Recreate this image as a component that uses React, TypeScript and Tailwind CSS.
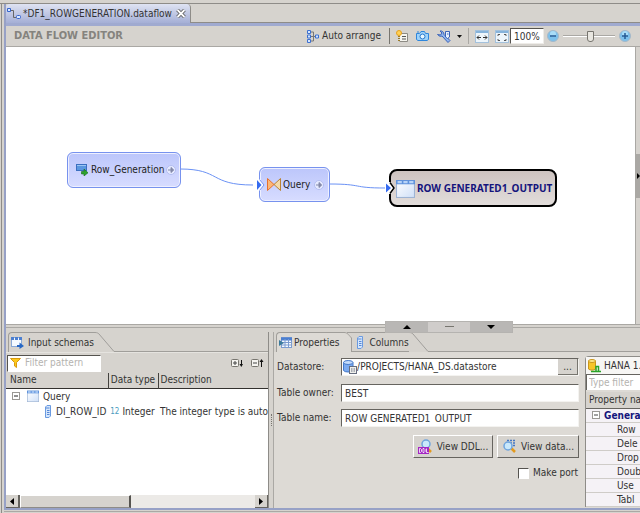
import type { ReactNode } from "react"

const properties = ["Row", "Dele", "Drop", "Doub", "Use", "Tabl"]

function Slant({ width, fill }: { width: number; fill: string }) {
  return (
    <svg width={width} height="20" viewBox={`0 0 ${width} 20`} className="shrink-0">
      <path d={`M0 0.5 C2 0.5 3 1 4 2 L${width} 19.5 L${width} 20 L0 20 Z`} fill={fill} />
      <path d={`M0 0.5 C2 0.5 3 1 4 2 L${width} 19.5`} fill="none" stroke="#a09e9a" />
    </svg>
  )
}

function NodeArrow() {
  return (
    <svg width="10" height="10" viewBox="0 0 10 10" className="shrink-0">
      <circle cx="5" cy="5" r="4.5" fill="#e6eaff" stroke="#b3bdf0" />
      <path d="M2 5h3.5M5 2.5L7.7 5L5 7.5Z" fill="#8288a8" stroke="#8288a8" />
    </svg>
  )
}

function TableIcon({ size }: { size: number }) {
  return (
    <svg width={size} height={size} viewBox="0 0 18 18" className="shrink-0">
      <defs>
        <linearGradient id="sheet" x1="0" y1="0" x2="1" y2="1">
          <stop offset="0" stopColor="#ffffff" />
          <stop offset="1" stopColor="#cfe0f8" />
        </linearGradient>
      </defs>
      <rect x="0.5" y="1.5" width="17" height="16" fill="url(#sheet)" stroke="#9eb4d4" />
      <rect x="0" y="1" width="18" height="4" fill="#5f92dc" />
      <path d="M1.500 3H5.500M7 3H11M12.500 3H16.500" stroke="#b8d4f8" strokeWidth="2" />
    </svg>
  )
}

function ColumnIcon({ className }: { className?: string }) {
  return (
    <svg width="8" height="13" viewBox="0 0 8 13" className={className}>
      <path d="M1.500 2L3 0.500H6.500V11L5 12.500H1.500Z" fill="#d5e6fb" stroke="#6a9ae0" />
      <path d="M2 3H5.500M3 5.500H5.500M3 7.500H5.500M3 9.500H5.500" stroke="#5688d8" />
    </svg>
  )
}

function MagnifierIcon({ kind }: { kind: "ddl" | "data" }) {
  return (
    <svg width="15" height="15" viewBox="0 0 15 15" className="shrink-0">
      {kind === "data" && (
        <path d="M5 1.500H13M5 4H13M5 6.500H13" stroke="#4477c4" strokeWidth="1.500" strokeDasharray="2 1" />
      )}
      <path d="M9 9L13 13" stroke="#e39a1d" strokeWidth="2.500" />
      <circle cx={kind === "ddl" ? 8 : 6} cy={kind === "ddl" ? 5 : 7} r="4" fill="#c9e8fb" stroke="#6fa4dd" strokeWidth="1.500" />
      {kind === "ddl" && (
        <>
          <rect x="0" y="8" width="11" height="7" fill="#a427c4" />
          <path d="M1.500 9.500V13.500H2.500L3.500 12.500V10.500L2.500 9.500ZM5 9.500V13.500H6L7 12.500V10.500L6 9.500ZM8.500 9.500V13.500H10.500" fill="none" stroke="#fff" strokeWidth="0.800" />
        </>
      )}
    </svg>
  )
}

function ToolButton({ label, children }: { label: string; children: ReactNode }) {
  return (
    <button aria-label={label} className="flex shrink-0 items-center justify-center">
      {children}
    </button>
  )
}

function ZoomIcon({ plus }: { plus?: boolean }) {
  return (
    <svg width="12" height="12" viewBox="0 0 12 12">
      <circle cx="6" cy="6" r="5.500" fill="#7cc0ec" stroke="#a5b8c8" />
      <circle cx="6" cy="4" r="3" fill="#a9dcf8" />
      <path d={plus ? "M3 6H9M6 3V9" : "M3 6H9"} stroke="#245a94" strokeWidth="1.500" />
    </svg>
  )
}

function FitIcon({ both }: { both?: boolean }) {
  return (
    <svg width="14" height="13" viewBox="0 0 14 13">
      <rect x="0.500" y="0.500" width="13" height="12" fill="#edf5fb" stroke="#a3c1dc" />
      <path d="M1 2H13" stroke="#86b3db" strokeWidth="2" />
      {both ? (
        <path d="M3 6V4.500H5M9 4.500H11V6M3 9V10.500H5M9 10.500H11V9" fill="none" stroke="#555" />
      ) : (
        <path d="M2 7.500H6M8 7.500H12M4 5.500L2 7.500L4 9.500M10 5.500L12 7.500L10 9.500" fill="none" stroke="#333" />
      )}
    </svg>
  )
}

function Toolbar() {
  return (
    <div className="flex h-[21px] shrink-0 items-center border-b border-[#aaa8a4] pr-[9px] pl-2">
      <h1 className="flex-1 text-[11px] font-bold whitespace-nowrap text-[#85837e]">DATA FLOW EDITOR</h1>
      <button className="flex items-center gap-[3px] whitespace-nowrap">
        <svg width="12" height="13" viewBox="0 0 12 13">
          <path d="M4 2H6.500V11H4M4 6.500H9" fill="none" stroke="#777" />
          <path d="M0.500 0.500H3.500V3.500H0.500ZM0.500 5H3.500V8H0.500ZM0.500 9.500H3.500V12.500H0.500ZM8.500 5H11.500V8H8.500Z" fill="#d5e6ff" stroke="#3d70d0" />
        </svg>
        Auto arrange
      </button>
      <div className="mr-1.5 ml-2 h-4 w-px bg-[#77756f]" />
      <div className="flex items-center gap-2">
        <ToolButton label="Validate">
          <svg width="12" height="12" viewBox="0 0 12 12">
            <path d="M4.500 3.500H11.500V11.500H3.500" fill="#f6f5ef" stroke="#8d8b84" />
            <path d="M6 6.500H10M6 9H10" stroke="#555" />
            <circle cx="3" cy="3" r="2.500" fill="#ffd257" stroke="#e6a01e" />
            <path d="M2 6.500H4M2 8.500H4M2 10.500H4" stroke="#9b7b28" />
          </svg>
        </ToolButton>
        <ToolButton label="Snapshot">
          <svg width="13" height="12" viewBox="0 0 13 12">
            <path d="M0.500 3.500H3.500L5 1.500H8.500L9.500 3.500H12.500V9.500L11 10.500H2L0.500 9.500Z" fill="#9dd2fa" stroke="#2e86dc" />
            <circle cx="6.500" cy="6.500" r="2.500" fill="#e4f6ff" stroke="#2476cd" />
            <path d="M1 2H3" stroke="#2e86dc" />
          </svg>
        </ToolButton>
        <ToolButton label="Tools">
          <svg width="14" height="13" viewBox="0 0 14 13">
            <path d="M0.500 4.500C2 6.500 4 6.500 5 6L11 12.500L13 10.500L7 4.500C7 2 5 0.500 3 1L5 3L3.500 5Z" fill="#8fb5f0" stroke="#3a62b8" />
            <path d="M8.500 1.500H12.500V7L10.500 8.500L8.500 7Z" fill="#e7f0fd" stroke="#3a62b8" />
            <path d="M10 4H11.500" stroke="#3a62b8" />
          </svg>
        </ToolButton>
      </div>
      <ToolButton label="More tools">
        <svg width="5" height="3" viewBox="0 0 5 3" className="ml-1.5">
          <path d="M0 0H5L2.500 3Z" fill="#111" />
        </svg>
      </ToolButton>
      <div className="mr-1.5 ml-1.5 h-4 w-px bg-[#aaa8a4]" />
      <div className="flex items-center gap-1.5">
        <ToolButton label="Fit width"><FitIcon /></ToolButton>
        <ToolButton label="Fit page"><FitIcon both /></ToolButton>
      </div>
      <input
        aria-label="Zoom level"
        defaultValue="100%"
        className="ml-px h-4 w-[34px] border border-[#eeece8] border-t-[#55534f] border-l-[#55534f] bg-white pl-[3px]"
      />
      <div className="ml-[3px] flex items-center gap-1">
        <ToolButton label="Zoom out"><ZoomIcon /></ToolButton>
        <input
          type="range"
          aria-label="Zoom"
          defaultValue="54"
          className="h-3 w-[52px] appearance-none bg-transparent [&::-webkit-slider-runnable-track]:h-0.5 [&::-webkit-slider-runnable-track]:border-t [&::-webkit-slider-runnable-track]:border-b [&::-webkit-slider-runnable-track]:border-t-[#aaa8a4] [&::-webkit-slider-runnable-track]:border-b-white [&::-webkit-slider-thumb]:-mt-[5px] [&::-webkit-slider-thumb]:h-[11px] [&::-webkit-slider-thumb]:w-[7px] [&::-webkit-slider-thumb]:appearance-none [&::-webkit-slider-thumb]:rounded-b-[3px] [&::-webkit-slider-thumb]:border [&::-webkit-slider-thumb]:border-[#77756f] [&::-webkit-slider-thumb]:bg-[#e8e6e0]"
        />
        <ToolButton label="Zoom in"><ZoomIcon plus /></ToolButton>
      </div>
    </div>
  )
}

function Canvas() {
  const node =
    "absolute flex items-center rounded-md border border-[#7792ee] bg-gradient-to-b from-[#bcc6fb] to-[#d7dcff] whitespace-nowrap text-[#222] shadow-[inset_0_0_0_1px_#eef0ff]"
  return (
    <div className="relative min-w-0 flex-1 bg-white">
      <svg width="560" height="180" viewBox="0 0 560 180" className="absolute top-0 left-0">
        <path d="M174 122C215 122 203 138 247 138M323 137C358 137 345 141 379 141" fill="none" stroke="#6b92f5" />
      </svg>
      <div className={`${node} top-[105px] left-[61px] h-[36px] w-[114px] gap-0.5 pr-[5px] pl-2`}>
        <svg width="13" height="12" viewBox="0 0 13 12" className="shrink-0">
          <rect x="0.500" y="0.500" width="10" height="6" fill="#5b97e0" stroke="#3b6fc0" />
          <path d="M1 1.500H10" stroke="#9cc6f4" />
          <path d="M5.500 7.500H8V5L12 8.800L8 12V10H5.500Z" fill="#2da32d" stroke="#176b17" strokeWidth="0.600" />
        </svg>
        <span className="flex-1">Row_Generation</span>
        <NodeArrow />
      </div>
      <div className={`${node} top-[120px] left-[253px] h-[35px] w-[71px] gap-0.5 pr-[5px] pl-[7px]`}>
        <svg width="14" height="13" viewBox="0 0 14 13" className="shrink-0">
          <path d="M0.500 0.500L7 6.500L0.500 12.500Z" fill="#fbb777" stroke="#e8702c" />
          <path d="M13.500 0.500L7 6.500L13.500 12.500Z" fill="#f4d9a8" stroke="#b98233" />
        </svg>
        <span className="flex-1">Query</span>
        <NodeArrow />
      </div>
      <div className="absolute top-[122px] left-[383px] flex h-[38px] w-[168px] items-center gap-0.5 rounded-lg border-2 border-black bg-gradient-to-b from-[#cdc3c0] to-[#e2dddb] pl-[5px] font-['Noto_Sans',sans-serif] font-bold whitespace-nowrap text-[#14147c]">
        <TableIcon size={19} />
        <span>ROW GENERATED1_OUTPUT</span>
      </div>
      {/* input ports */}
      <svg width="8" height="12" viewBox="0 0 8 12" className="absolute top-[132px] left-[251px]">
        <path d="M0 0H2.500L7 6L2.500 12H0Z" fill="#fff" />
        <path d="M2.500 0.500L7 6L2.500 11.500" fill="none" stroke="#7792ee" />
        <path d="M0 1L4.500 6L0 11Z" fill="#356bf0" />
      </svg>
      <svg width="10" height="12" viewBox="0 0 10 12" className="absolute top-[135px] left-[380px]">
        <path d="M0 0H5L9 6L5 12H0Z" fill="#fff" />
        <path d="M4 0.500L8 6L4 11.500" fill="none" stroke="#000" strokeWidth="1.500" />
        <path d="M0 1.500L5 6L0 10.500Z" fill="#356bf0" />
      </svg>
    </div>
  )
}

function InputSchemas() {
  return (
    <section className="flex w-[41.500%] min-w-0 flex-col border-r border-[#8e8c88]">
      <div className="flex h-5 shrink-0 pl-0.5">
        <div className="flex items-center gap-1 rounded-tl-sm border-t border-l border-[#a09e9a] pr-px pl-0.5 whitespace-nowrap">
          <svg width="13" height="12" viewBox="0 0 13 12">
            <rect x="0.500" y="0.500" width="10" height="9" fill="#f5faff" stroke="#8aa9d6" />
            <path d="M0 1.500H11" stroke="#4c7fd0" strokeWidth="3" strokeDasharray="3 1" />
            <path d="M6 8H8.500V5.500L13 9L8.500 12V10H6Z" fill="#2767c4" />
          </svg>
          Input schemas
        </div>
        <Slant width={19} fill="#d6d3ce" />
        <div className="flex-1 border-b border-[#a09e9a]" />
      </div>
      <div className="flex h-[21px] shrink-0 items-center border-t border-[#e5e3df] pr-1 pl-px">
        <label className="flex h-[17px] w-[94px] items-center gap-1 border border-white border-t-[#55534f] border-l-[#55534f] bg-white pl-0.5">
          <svg width="11" height="10" viewBox="0 0 11 10" className="shrink-0">
            <path d="M0.500 0.500H10.500L6.500 4.500V9.500L4.500 8V4.500Z" fill="#fdc91a" stroke="#d89a10" />
          </svg>
          <input aria-label="Filter pattern" placeholder="Filter pattern" className="w-full min-w-0 placeholder:text-[#b5b3b0]" />
        </label>
        <div className="flex flex-1 justify-end gap-2">
          <ToolButton label="Expand all">
            <svg width="12" height="9" viewBox="0 0 12 9">
              <rect x="0.500" y="0.500" width="7" height="7" rx="1" fill="#f5f4f0" stroke="#77756f" />
              <path d="M2 4H6M4 2V6" stroke="#444" />
              <path d="M10.500 1V6" stroke="#111" />
              <path d="M8.500 5H12L10.300 8Z" fill="#111" />
            </svg>
          </ToolButton>
          <ToolButton label="Collapse all">
            <svg width="13" height="9" viewBox="0 0 13 9">
              <rect x="0.500" y="0.500" width="7" height="7" rx="1" fill="#f5f4f0" stroke="#77756f" />
              <path d="M2 4H6" stroke="#444" />
              <path d="M10.500 3V8" stroke="#111" />
              <path d="M8.500 3H12.500L10.500 0Z" fill="#111" />
            </svg>
          </ToolButton>
        </div>
      </div>
      <div className="min-h-0 flex-1 overflow-hidden bg-white">
        <table className="w-full table-fixed border-collapse whitespace-nowrap">
          <thead>
            <tr className="h-[15px] border-b border-[#33312e] bg-[#d6d3ce] text-left leading-[14px]">
              <th className="w-[39%] border-r border-[#44423e] pl-1 font-normal">Name</th>
              <th className="w-[19%] border-r border-[#44423e] pl-0.5 font-normal">Data type</th>
              <th className="pl-0.5 font-normal">Description</th>
            </tr>
          </thead>
          <tbody className="leading-[15px]">
            <tr>
              <td colSpan={3}>
                <div className="flex items-center gap-1 pl-1.5">
                  <svg width="8" height="8" viewBox="0 0 8 8">
                    <rect x="0.500" y="0.500" width="7" height="7" fill="#fff" stroke="#9a9894" />
                    <path d="M2 4H6" stroke="#222" />
                  </svg>
                  <div className="flex gap-1 pl-[3px]">
                    <div className="flex items-center"><TableIcon size={12} /></div>
                    Query
                  </div>
                </div>
              </td>
            </tr>
            <tr>
              <td>
                <div className="flex items-center gap-1 pl-[38px]">
                  <ColumnIcon className="shrink-0" />
                  DI_ROW_ID
                </div>
              </td>
              <td className="pl-0.5">
                <span className="pr-[3px] align-top text-[8px] text-[#4a9cc0]">12</span>Integer
              </td>
              <td className="pl-0.5">The integer type is auto</td>
            </tr>
          </tbody>
        </table>
      </div>
      <div className="flex h-[13px] shrink-0 bg-[#eceae7]">
        <button aria-label="Scroll left" className="flex w-[14px] items-center justify-center border-r-2 border-b border-[#66645f] bg-[#d6d3ce]">
          <svg width="4" height="7" viewBox="0 0 4 7"><path d="M4 0V7L0 3.500Z" /></svg>
        </button>
        <div className="flex-1">
          <div className="h-full w-[47%] border-t border-r-2 border-b border-l border-t-white border-r-[#55534f] border-b-[#8e8c88] border-l-white bg-[#d6d3ce]" />
        </div>
        <button aria-label="Scroll right" className="flex w-[13px] items-center justify-center border-r border-b border-[#66645f] bg-[#d6d3ce]">
          <svg width="4" height="7" viewBox="0 0 4 7"><path d="M0 0V7L4 3.500Z" /></svg>
        </button>
      </div>
    </section>
  )
}

function PropertiesForm() {
  const field =
    "min-w-0 flex-1 border border-[#f4f3f0] border-t-[#66645f] border-l-[#66645f] bg-white"
  const button =
    "flex h-[23px] items-center justify-center gap-1 border border-t-white border-r-[#66645f] border-b-[#66645f] border-l-white bg-[#d6d3ce] whitespace-nowrap"
  return (
    <form className="flex min-w-0 flex-1 flex-col pt-1.5 pr-1.5 pl-[3px]">
      <div className="flex h-[18px] items-center">
        <label htmlFor="datastore" className="w-16 shrink-0 whitespace-nowrap">Datastore:</label>
        <div className={`${field} flex h-[18px] items-center pl-px`}>
          <svg width="14" height="14" viewBox="0 0 14 14" className="shrink-0">
            <path d="M0.500 2.500V10.500C2 12.500 8 12.500 10 10.500V2.500Z" fill="#7baaf0" stroke="#4478c8" />
            <ellipse cx="5.200" cy="2.500" rx="4.700" ry="2" fill="#c5dcfb" stroke="#4478c8" />
            <rect x="6.500" y="6.500" width="7" height="7" fill="#f0f0ec" stroke="#666e80" />
            <path d="M8 9H12M8 11H12" stroke="#666e80" strokeDasharray="1.500 1" />
          </svg>
          <input id="datastore" defaultValue="/PROJECTS/HANA_DS.datastore" className="h-4 w-full min-w-0 leading-4" />
          <button type="button" className="flex h-full w-5 shrink-0 items-center justify-center border-r border-b border-[#77756f] bg-[#d6d3ce]">...</button>
        </div>
      </div>
      <div className="mt-2 flex h-[18px] items-center">
        <label htmlFor="owner" className="w-16 shrink-0 whitespace-nowrap">Table owner:</label>
        <input id="owner" defaultValue="BEST" className={`${field} h-[18px] pl-[3px] leading-4`} />
      </div>
      <div className="mt-[7px] flex h-[18px] items-center">
        <label htmlFor="table" className="w-16 shrink-0 whitespace-nowrap">Table name:</label>
        <input id="table" defaultValue="ROW GENERATED1_OUTPUT" className={`${field} h-[18px] pl-[3px] leading-4`} />
      </div>
      <div className="mt-2 flex justify-end gap-1">
        <button type="button" className={`${button} w-20`}>
          <MagnifierIcon kind="ddl" />
          View DDL...
        </button>
        <button type="button" className={`${button} w-[82px]`}>
          <MagnifierIcon kind="data" />
          View data...
        </button>
      </div>
      <label className="mt-2 mr-px flex items-center gap-1 self-end whitespace-nowrap">
        <input type="checkbox" className="size-[11px] appearance-none border border-white border-t-[#55534f] border-l-[#55534f] bg-white" />
        Make port
      </label>
    </form>
  )
}

function PropertyPanel() {
  return (
    <aside className="mt-1 flex w-[55px] shrink-0 flex-col self-start rounded-tl-sm border-t border-l border-[#8e8c88] whitespace-nowrap">
      <div className="flex h-[17px] items-center gap-0.5 bg-[#f7f6f4] pl-0.5">
        <svg width="14" height="14" viewBox="0 0 14 14" className="shrink-0">
          <path d="M0.500 2V10C2 11.500 6 11.500 7.500 10V2Z" fill="#f6c528" stroke="#c9951a" />
          <ellipse cx="4" cy="2" rx="3.500" ry="1.500" fill="#fde88c" stroke="#c9951a" />
          <path d="M3 12.500H13M8 12V7.500H10.500V12" fill="none" stroke="#29a329" strokeWidth="1.500" />
        </svg>
        HANA 1.
      </div>
      <input
        aria-label="Type filter"
        placeholder="Type filter"
        className="h-4 w-full border-t border-l border-[#66645f] bg-white pl-0.5 placeholder:text-[#b5b3b0]"
      />
      <table className="mt-0.5 w-full table-fixed border-collapse border-b border-[#8e8c88] bg-[#f5f2f6]">
        <thead>
          <tr className="h-4 border-b border-[#66645f] bg-[#d6d3ce] text-left leading-[14px]">
            <th className="pl-[3px] font-normal">Property na</th>
          </tr>
        </thead>
        <tbody className="leading-[13px]">
          <tr className="border-b border-[#cfccc8] font-bold text-[#14147c]">
            <td>
              <div className="flex items-center gap-1 pl-1.5">
                <svg width="8" height="8" viewBox="0 0 8 8" className="shrink-0">
                  <rect x="0.500" y="0.500" width="7" height="7" fill="#fff" stroke="#9a9894" />
                  <path d="M2 4H6" stroke="#444" />
                </svg>
                Genera
              </div>
            </td>
          </tr>
          {properties.map((name) => (
            <tr key={name} className="border-b border-[#cfccc8]">
              <td className="pl-[31px]">{name}</td>
            </tr>
          ))}
        </tbody>
      </table>
    </aside>
  )
}

export default function App() {
  return (
    <div className="flex h-screen w-full flex-col overflow-hidden bg-[#d6d3ce] font-['DejaVu_Sans_Condensed','DejaVu_Sans',sans-serif] text-[10px] leading-[14px] text-[#333]">
      <div className="h-1 shrink-0 border-b border-[#8e8c88]" />
      <div className="ml-px flex min-h-0 flex-1 flex-col border-l border-[#8e8c88] pl-0.5">
        <div className="flex min-h-0 flex-1 flex-col border-b-2 border-l-2 border-[#97a1c6]">
          <div className="flex h-[22px] shrink-0 border-b-[3px] border-[#a0aad0]">
            <div className="flex items-center gap-0.5 rounded-t-sm border-r border-[#8e8c88] bg-gradient-to-b from-[#dfe3f2] to-[#a5afd6] pr-1 pl-px whitespace-nowrap">
              <svg width="14" height="12" viewBox="0 0 14 12">
                <path d="M4 2.500H6.500V9.500H9" fill="none" stroke="#666" />
                <path d="M0.500 0.500H3.500V3.500H0.500Z" fill="#d9e7ff" stroke="#3565cc" />
                <rect x="9.500" y="7.500" width="4" height="3" rx="1" fill="#d9e7ff" stroke="#3565cc" />
              </svg>
              *DF1_ROWGENERATION.dataflow
              <button aria-label="Close" className="ml-0.5">
                <svg width="10" height="9" viewBox="0 0 10 9">
                  <path d="M1.500 1L8.500 8M8.500 1L1.500 8" stroke="#555" strokeWidth="3.500" />
                  <path d="M1.500 1L8.500 8M8.500 1L1.500 8" stroke="#fff" strokeWidth="1.800" />
                </svg>
              </button>
            </div>
            <div className="flex-1 border-b border-[#8e8c88]" />
          </div>
          <Toolbar />
          <div className="flex min-h-0 flex-1">
            <Canvas />
            <div className="flex w-[5px] shrink-0 flex-col justify-center border-l border-[#aaa8a4] pb-5">
              <button aria-label="Show palette" className="flex h-11 items-center justify-end bg-[#aaa8a4]">
                <svg width="3" height="6" viewBox="0 0 3 6"><path d="M0 0V6L3 3Z" /></svg>
              </button>
            </div>
          </div>
          <div className="relative flex h-[184px] shrink-0 flex-col border-t border-[#aaa8a4]">
            <div className="mt-0.5 h-px shrink-0 bg-[#aaa8a4]" />
            <div className="absolute -top-1 left-[379px] flex h-3 w-32 border border-[#b5b3b0] bg-[#d0cdcb]">
              <button aria-label="Maximize" className="flex flex-1 items-center justify-center bg-[#b9b7b5]">
                <svg width="8" height="4" viewBox="0 0 8 4"><path d="M0 4H8L4 0Z" /></svg>
              </button>
              <button aria-label="Restore" className="flex flex-1 items-center justify-center">
                <svg width="9" height="2" viewBox="0 0 9 2"><path d="M0 0.500H9" stroke="#77756f" /></svg>
              </button>
              <button aria-label="Minimize" className="flex flex-1 items-center justify-center bg-[#b9b7b5]">
                <svg width="8" height="4" viewBox="0 0 8 4"><path d="M0 0H8L4 4Z" /></svg>
              </button>
            </div>
            <div className="flex min-h-0 flex-1 pt-1">
              <InputSchemas />
              <div className="flex w-[5px] shrink-0 flex-col items-center justify-center border-r border-[#aaa8a4]">
                <div className="h-3 border-l border-dotted border-[#77756f]" />
              </div>
              <section className="flex min-w-0 flex-1 flex-col bg-[#dddad5]">
                <div className="flex h-5 shrink-0 bg-[#d6d3ce] pl-0.5">
                  <div className="flex items-center gap-0.5 rounded-tl-sm border-t border-l border-[#a09e9a] bg-[#dddad5] pr-1 pl-0.5 whitespace-nowrap">
                    <svg width="13" height="11" viewBox="0 0 13 11">
                      <rect x="2.500" y="0.500" width="10" height="10" fill="#f5faff" stroke="#7c9cd0" />
                      <path d="M2 2H13" stroke="#4c7fd0" strokeWidth="3" />
                      <path d="M6 2V10M9.500 2V10M3 5.500H12M3 8H12" stroke="#7c9cd0" />
                      <path d="M0 3L5 6L0 9Z" fill="#3b7a9c" />
                    </svg>
                    Properties
                  </div>
                  <svg width="8" height="20" viewBox="0 0 8 20" className="shrink-0">
                    <path d="M0 0.500C3 0.500 4 2 7.500 6V20H0Z" fill="#dddad5" />
                    <path d="M0 0.500C3 0.500 4 2 7.500 6V20M3 0.500H8" fill="none" stroke="#a09e9a" />
                  </svg>
                  <div className="flex items-center gap-1.5 border-t border-b border-t-[#a09e9a] border-b-[#a09e9a] pt-px pl-1">
                    <ColumnIcon />
                    Columns
                  </div>
                  <Slant width={19} fill="#d6d3ce" />
                  <div className="flex-1 border-b border-[#a09e9a]" />
                </div>
                <div className="flex min-h-0 flex-1">
                  <PropertiesForm />
                  <PropertyPanel />
                </div>
              </section>
            </div>
          </div>
        </div>
        <div className="mt-px mb-px h-px shrink-0 bg-[#aaa8a4]" />
      </div>
    </div>
  )
}
